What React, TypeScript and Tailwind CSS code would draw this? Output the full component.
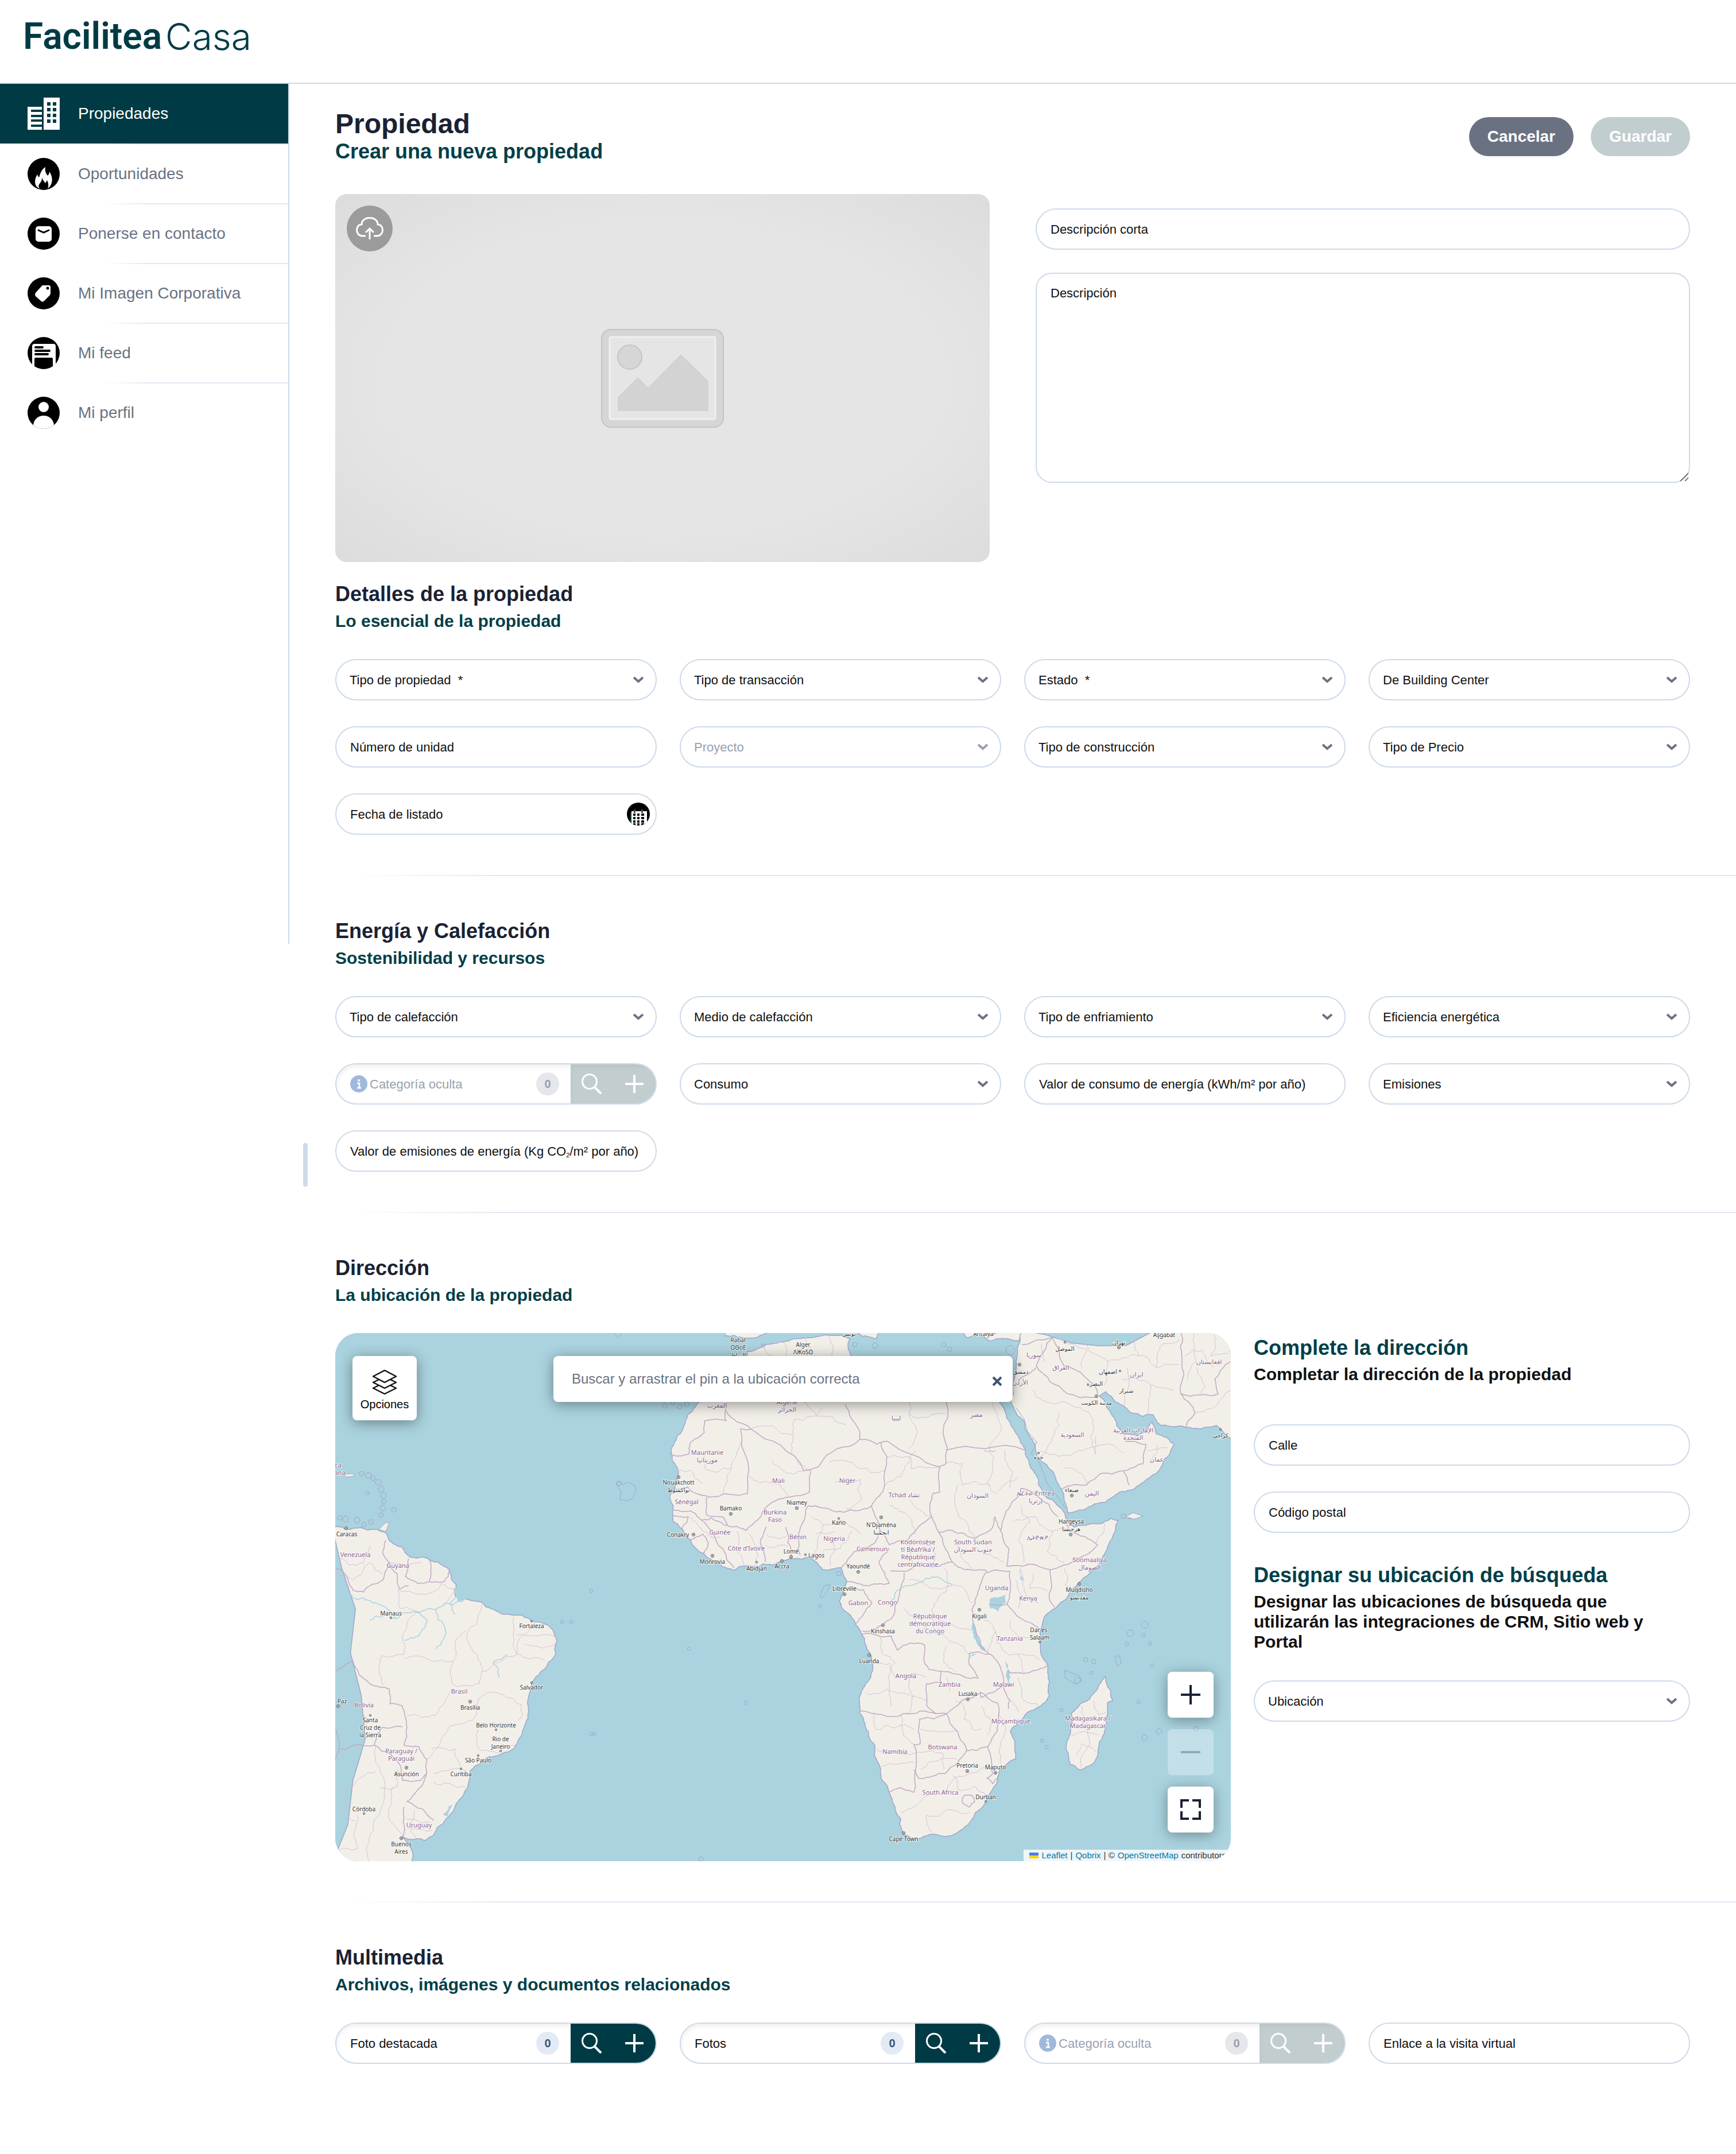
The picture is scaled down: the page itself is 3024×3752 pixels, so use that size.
import { ReactNode } from "react";

const NAV = [
  { label: "Propiedades", icon: "buildings", active: true },
  { label: "Oportunidades", icon: "flame" },
  { label: "Ponerse en contacto", icon: "mail" },
  { label: "Mi Imagen Corporativa", icon: "tag" },
  { label: "Mi feed", icon: "feed" },
  { label: "Mi perfil", icon: "user" },
];

function NavIcon({ name }: { name: string }) {
  if (name === "buildings") {
    return (
      <svg className="size-14 shrink-0" viewBox="0 0 56 56" fill="#fff">
        <path d="M0 16H25V21H6V25H25V30H6V34H25V38H6V42H25V47H6V51H25V56H0Z" />
        <path
          fillRule="evenodd"
          d="M28 0H56V56H28ZM34 8V14H40V8ZM44 8V14H50V8ZM34 18V24H40V18ZM44 18V24H50V18ZM34 28V34H40V28ZM44 28V34H50V28ZM34 38V44H40V38ZM44 38V44H50V38Z"
        />
      </svg>
    );
  }
  return (
    <svg className="size-14 shrink-0 rounded-full bg-black" viewBox="0 0 56 56" fill="#fff">
      {name === "flame" && (
        <>
          <path d="M31 16C30 24 32 27 35 31C37 29 38 27 38 24C43 31 44 40 41 46C39 51 35 54 29 55C20 55 13 50 13 42C13 36 15 32 17 29C18 32 19 33 20 34C22 28 24 20 31 16Z" />
          <path
            fill="#000"
            d="M25 34C26 38 28 40 31 44L34 39C37 45 37 51 34 54C31 56 24 56 21 53C17 49 21 45 23 42C25 39 25 37 25 34Z"
          />
        </>
      )}
      {name === "mail" && (
        <>
          <rect x="14" y="15" width="28" height="27" rx="5" />
          <path d="M19 22L28 26L37 22" stroke="#000" strokeWidth="3" fill="none" strokeLinecap="round" />
        </>
      )}
      {name === "tag" && (
        <>
          <path d="M27 14H37Q40 14 40 17V27Q40 29 39 31L29 41Q26 44 23 41L14 33Q12 30 14 27L24 16Q25 14 27 14Z" />
          <circle cx="35" cy="19" r="2.5" fill="#000" />
        </>
      )}
      {name === "feed" && (
        <>
          <rect x="8" y="12" width="41" height="48" rx="4" />
          <path d="M14 18H26M14 24H38M14 30H35" stroke="#000" strokeWidth="4" strokeLinecap="round" />
          <rect x="12" y="36" width="32" height="24" rx="2" fill="#000" />
        </>
      )}
      {name === "user" && (
        <>
          <circle cx="28" cy="18" r="9" />
          <path d="M10 51C10 40 18 33 28 33C38 33 46 40 46 51C41 55 35 56 28 56C21 56 15 55 10 51Z" />
        </>
      )}
    </svg>
  );
}

function Chevron({ muted }: { muted?: boolean }) {
  return (
    <svg
      className={
        muted
          ? "pointer-events-none absolute top-1/2 right-[22px] h-3 w-5 -translate-y-1/2 text-gray-400"
          : "pointer-events-none absolute top-1/2 right-[22px] h-3 w-5 -translate-y-1/2 text-gray-500"
      }
      viewBox="0 0 20 12"
      fill="none"
      stroke="currentColor"
      strokeWidth="4"
    >
      <path d="M2 2L10 9L18 2" />
    </svg>
  );
}

function SelectField({ label, disabled }: { label: string; disabled?: boolean }) {
  return (
    <div className="relative">
      <select
        aria-label={label}
        disabled={disabled}
        className="h-[72px] w-full appearance-none rounded-full border-2 border-[#cddaea] bg-white pr-14 pl-[23px] text-[22px] text-[#111] disabled:text-gray-400 disabled:opacity-100"
      >
        <option>{label}</option>
      </select>
      <Chevron muted={disabled} />
    </div>
  );
}

function TextField({ label, children }: { label: ReactNode; children?: ReactNode }) {
  return (
    <label className="relative block">
      <span className="pointer-events-none absolute inset-y-0 left-[26px] flex items-center text-[22px] whitespace-nowrap text-[#111]">
        <span>{label}</span>
      </span>
      <input
        type="text"
        className="block h-[72px] w-full rounded-full border-2 border-[#cddaea] px-6 text-[22px]"
      />
      {children}
    </label>
  );
}

function CalendarIcon() {
  return (
    <svg className="absolute top-4 right-3 size-10 rounded-full bg-black" viewBox="0 0 40 40">
      <path d="M6 18L9 15V40H6Z" fill="#0b4a55" />
      <path d="M8 15H12V12H15V15H25V12H28V15H35V40H8Z" fill="#fff" />
      <path d="M13.500 10V18M26.500 10V18" stroke="#000" strokeWidth="2" />
      <path
        d="M11 21H15M18 21H22M25 21H30M11 27H15M18 27H22M25 27H30M11 33H15M18 33H22M25 33H30M11 38H15M18 38H22M25 38H30"
        stroke="#000"
        strokeWidth="4"
      />
    </svg>
  );
}

function PickerField({ label, hidden }: { label: string; hidden?: boolean }) {
  return (
    <div className="flex h-[72px] items-stretch overflow-hidden rounded-full border-2 border-[#cddaea] shadow-[inset_0_4px_8px_rgba(0,0,0,0.07)]">
      <div className="flex min-w-0 flex-1 items-center pr-5 pl-6">
        {hidden && (
          <svg className="mr-1 size-[30px] shrink-0" viewBox="0 0 30 30">
            <circle cx="15" cy="15" r="15" fill="#9fb9dc" />
            <circle cx="15" cy="9" r="2" fill="#fff" />
            <path d="M12 14H16V22M12 22H19" stroke="#fff" strokeWidth="2.500" fill="none" />
          </svg>
        )}
        <span
          className={
            hidden
              ? "flex-1 text-[22px] whitespace-nowrap text-gray-400"
              : "flex-1 text-[22px] whitespace-nowrap text-[#111]"
          }
        >
          {label}
        </span>
        <span
          className={
            hidden
              ? "flex size-10 items-center justify-center rounded-full bg-gray-200 text-xl font-bold text-gray-400"
              : "flex size-10 items-center justify-center rounded-full bg-[#e2ebf4] text-xl font-bold text-[#3f5573]"
          }
        >
          0
        </span>
      </div>
      <div
        className={
          hidden
            ? "flex w-[148px] items-center bg-[#c2cdcf] shadow-[inset_0_4px_8px_rgba(0,0,0,0.05)]"
            : "flex w-[148px] items-center bg-[#003b45]"
        }
      >
        <button type="button" disabled={hidden} aria-label={"Buscar " + label} className="flex h-full flex-1 items-center justify-center">
          <svg className="size-9" viewBox="0 0 36 36" fill="none" stroke="#fff" strokeWidth="3">
            <circle cx="14" cy="14" r="12.500" />
            <path d="M22 23L34 35" strokeWidth="4" />
          </svg>
        </button>
        <button type="button" disabled={hidden} aria-label={"Añadir " + label} className="flex h-full flex-1 items-center justify-center">
          <svg className="size-8" viewBox="0 0 32 32" stroke="#fff" strokeWidth="4">
            <path d="M16 0V32M0 16H32" />
          </svg>
        </button>
      </div>
    </div>
  );
}

function Divider() {
  return (
    <div className="-mr-20 mt-[70px] mb-[72px] h-0.5 bg-[linear-gradient(to_right,transparent_20px,#e2e8f1_300px)]" />
  );
}

function SectionTitle({ title, subtitle }: { title: string; subtitle: string }) {
  return (
    <div className="mb-[43px]">
      <h2 className="text-[36px] leading-[48px] font-bold text-[#1a2233]">{title}</h2>
      <p className="text-[30px] leading-[46px] font-bold text-[#003f48]">{subtitle}</p>
    </div>
  );
}

/* ---------- map ---------- */

// Subdivides each segment and nudges the midpoints, so that borders look surveyed.
function rough(line: string, amount: number, close = false) {
  let pts = line
    .trim()
    .split(/\s+/)
    .map((p) => p.split(",").map(Number));
  if (close) pts.push(pts[0]);
  let seed = Math.round(pts[0][0] * 31 + pts[0][1] * 17 + pts.length);
  const rand = () => {
    seed = (seed * 1103515245 + 12345) % 2147483648;
    return seed / 2147483648 - 0.5;
  };
  for (let pass = 0; pass < 3; pass++) {
    const next = [pts[0]];
    for (let i = 1; i < pts.length; i++) {
      const [ax, ay] = pts[i - 1];
      const [bx, by] = pts[i];
      const len = Math.hypot(bx - ax, by - ay);
      if (len > 4) {
        const k = rand() * len * amount;
        next.push([(ax + bx) / 2 - ((by - ay) / len) * k, (ay + by) / 2 + ((bx - ax) / len) * k]);
      }
      next.push(pts[i]);
    }
    pts = next;
  }
  return "M" + pts.map((p) => p[0].toFixed(1) + " " + p[1].toFixed(1)).join("L") + (close ? "Z" : "");
}

const LAND = [
  // South America
  "-6,336 19,342 45,339 70,342 86,347 94,361 115,372 130,390 156,391 180,399 198,412 202,427 211,439 209,458 232,464 253,468 277,482 292,490 324,491 347,503 379,517 386,537 384,556 371,574 355,595 342,611 337,632 337,660 331,681 324,702 311,724 298,730 269,738 253,750 235,762 231,791 214,816 193,846 177,862 170,876 156,884 128,882 117,877 128,892 135,904 130,926 -6,926",
  // Africa
  "634,120 626,130 614,142 608,161 596,179 585,207 587,222 596,234 596,252 591,271 583,289 589,301 589,329 604,341 618,360 628,375 642,384 657,396 673,406 694,413 712,406 745,402 761,404 794,393 826,390 838,399 849,412 871,410 881,409 885,421 891,433 885,451 878,467 889,485 906,507 916,522 924,543 934,568 934,592 924,611 913,641 914,663 924,687 940,718 945,748 951,776 965,800 975,825 985,846 983,856 990,874 1004,880 1034,874 1063,877 1087,868 1108,849 1128,825 1135,813 1152,785 1156,764 1173,748 1185,742 1184,712 1176,693 1194,675 1207,660 1228,650 1244,632 1244,608 1242,580 1232,565 1228,543 1228,519 1238,491 1256,479 1280,451 1297,433 1321,412 1342,381 1359,344 1364,326 1352,323 1331,332 1304,335 1287,338 1276,326 1271,314 1259,301 1235,283 1225,265 1216,240 1204,216 1194,191 1176,158 1166,136 1156,118 1110,90 1000,95 930,80 905,50 897,36 893,20 897,10 885,3 840,6 800,10 760,19 733,29 718,32 700,62",
  // Asia
  "1190,-6 1188,38 1184,70 1180,90 1177,118 1182,130 1201,155 1214,185 1228,222 1249,240 1264,271 1271,295 1276,314 1304,308 1342,295 1366,277 1400,265 1418,252 1438,234 1442,222 1452,213 1461,194 1449,182 1431,176 1423,155 1414,170 1397,179 1373,176 1361,161 1349,136 1331,109 1342,102 1362,121 1387,139 1407,145 1424,142 1438,161 1480,164 1535,161 1552,179 1566,185 1566,-6",
  // Madagascar
  "1342,598 1349,620 1354,641 1345,644 1344,669 1331,712 1319,751 1297,761 1280,751 1273,724 1280,699 1282,663 1297,647 1314,638 1328,620",
  // Iberia, Sicily, Anatolia
  "676,-6 680,5 708,8 740,4 762,-6",
  "905,-6 918,6 942,10 950,-6",
  "1088,-6 1100,8 1130,6 1142,14 1168,10 1192,14 1196,-6",
];

const COUNTRIES = [
  "88,361 83,384 94,399 83,430 49,451 31,448 10,412 0,410",
  "94,399 108,420 112,446 128,440",
  "128,393 122,424 143,436 164,433 167,406 164,395",
  "164,433 190,433 200,412",
  "0,589 31,571 41,595 78,617 94,620 95,646 116,649 125,687 120,718 146,721 159,742 159,767 125,816 172,849",
  "7,724 68,718 81,687 117,686",
  "0,690 7,724 0,745",
  "68,718 115,758 117,779 149,779 159,767",
  "120,825 118,877",
  "583,211 616,211 618,191 643,173 643,153 681,153 681,124",
  "681,136 724,167 706,167 718,280 675,281 651,286 638,283 614,268 591,272",
  "724,167 816,240 843,231 914,185 900,150 889,124",
  "914,185 943,194 961,188 1053,233 1064,227 1064,120",
  "1064,204 1201,204",
  "951,191 961,216 957,265 934,301 900,308 871,311 824,301 818,320 810,338 810,387",
  "828,240 826,277 787,286 761,295 741,320 716,344 683,335 675,320 647,317 647,286",
  "1053,233 1053,277 1041,280 1039,320 1051,347 1075,344 1116,357 1141,344 1149,320 1159,344 1173,375 1170,406 1194,406 1245,412 1276,403 1328,369 1280,344 1271,316",
  "1159,344 1176,301 1194,271 1221,283 1259,320",
  "1245,412 1245,467 1254,480",
  "934,301 949,344 965,369 998,360 1039,320",
  "949,344 930,372 905,380 890,400 881,409",
  "965,375 947,399 965,436 930,440 891,433",
  "967,415 989,415 1026,406 1075,399 1096,412 1136,415",
  "1051,347 1060,370 1075,399",
  "991,418 981,461 969,497 949,510 918,519",
  "918,525 969,528 979,552 1002,540 1026,543 1034,586 1055,589 1055,608 1030,611 1030,647 1047,663 990,663 914,658",
  "1047,663 1065,663 1018,672 1019,715 1008,717 1008,800 985,792 965,800",
  "1008,761 1018,776 1063,767 1100,727 1083,693 1065,663 1124,626 1153,644 1153,693 1136,721 1100,727",
  "1136,721 1145,767 1135,775 1145,785 1155,775",
  "1055,589 1104,601 1120,601 1104,577 1104,559 1139,559 1159,583 1163,614 1125,635 1124,626",
  "1163,614 1175,640 1172,655",
  "1170,589 1207,592 1242,580",
  "1139,472 1170,472 1228,516",
  "1132,418 1175,415 1176,448 1170,472",
  "1132,418 1116,461 1111,503 1125,546 1139,559",
  "638,326 667,369 680,385 694,410",
  "589,308 620,310 638,326 655,322 683,335",
  "751,338 741,360 749,399",
  "785,338 788,365 794,390",
  "589,318 615,320 612,330 604,341",
  "618,360 640,350 650,365 642,384",
  "891,445 920,447 935,470 920,490 906,507",
  "1221,60 1190,84",
  "1196,20 1249,8 1221,57 1276,106 1325,112",
  "1266,271 1307,265 1331,246 1373,240 1407,228 1412,194 1376,188",
  "1373,240 1383,265",
  "1249,8 1269,57 1304,75 1328,106",
  "1470,-5 1476,8 1478,69 1473,106 1498,139 1481,164",
  "1473,106 1538,106 1532,80 1559,50",
  "1095,806 1110,806 1114,816 1104,826 1092,818 1095,806",
];

const REGIONS = [
  "141,484 117,534 120,559 81,562 83,614",
  "120,568 206,572",
  "256,470 248,497 232,519 253,574 251,611 204,611 206,572 209,540 227,519",
  "311,494 316,559 279,574 256,589",
  "340,510 316,559 365,570",
  "330,540 352,546 384,540",
  "316,525 350,528 384,530",
  "256,632 290,629 324,647 319,675",
  "201,684 240,674 256,632",
  "125,666 175,666 204,620",
  "201,684 177,724 159,742",
  "248,690 253,727 311,718",
  "167,724 209,724 217,755",
  "172,767 230,764",
  "170,782 227,791",
  "70,721 70,748 78,764 78,834 60,877 60,920",
  "78,791 107,791 110,760",
  "39,840 39,898 7,900",
  "15,782 18,834 35,850",
  "0,800 30,790 70,764",
  "100,791 95,850 118,877",
  "109,448 112,479 138,484",
  "109,448 185,436 211,450 190,476",
  "60,370 50,400 0,390",
  "0,420 30,430 60,400 83,420",
  "94,399 120,405 150,400",
  "125,845 145,850 165,852",
  "130,862 150,865 168,866",
  "138,830 140,880",
  "20,600 10,640 35,690",
  "0,660 40,655 60,690",
  "724,167 798,178 796,212 830,238",
  "798,178 800,150 850,130",
  "860,225 900,225 930,240 957,240",
  "817,120 840,145 890,160",
  "1000,120 998,202",
  "1000,140 1064,140",
  "1064,227 1092,227 1092,265 1140,265",
  "961,216 1002,216 1002,236 1053,233",
  "1010,205 1000,225 985,250 957,265",
  "1140,204 1135,260 1150,280 1190,250",
  "1145,120 1160,160 1140,204",
  "1165,204 1180,240 1175,270",
  "1085,265 1080,300 1100,330 1116,357",
  "643,211 643,235 690,235 706,190",
  "690,235 675,281",
  "596,238 620,240 640,262",
  "720,250 760,260 790,286",
  "760,222 780,240 816,240",
  "870,260 915,255 917,290 890,305",
  "620,320 640,345 670,355",
  "700,345 700,380 712,404",
  "720,350 735,375 730,404",
  "751,350 785,355",
  "751,370 788,372",
  "830,320 850,335 840,365 826,390",
  "850,335 890,330 915,350",
  "850,380 880,375 900,345",
  "865,360 862,405",
  "838,350 870,345",
  "1000,290 1020,310 1039,320",
  "965,300 1000,320 1010,350",
  "1025,365 1045,385 1040,402",
  "1000,370 1005,400 1020,408",
  "1080,360 1090,390 1110,410",
  "1110,375 1140,385 1165,400",
  "1000,430 1040,445 1090,440 1110,470",
  "1060,410 1065,450 1040,480 1045,517",
  "990,480 1020,520 1111,517",
  "1045,517 1080,540 1104,559",
  "1065,545 1060,575 1080,590",
  "934,575 965,575 975,600 1030,600",
  "950,530 955,560 975,575 965,620 968,650",
  "924,625 960,620 1000,630 1030,640",
  "1000,600 1000,663",
  "940,663 942,690 980,685 1008,690",
  "985,665 990,700 1008,717",
  "940,722 975,730 1008,732",
  "951,755 985,750 1008,748",
  "1019,690 1055,695 1083,693",
  "1008,732 1058,732 1060,760",
  "1020,760 1050,745 1085,745",
  "985,835 1020,815 1060,800 1100,770 1140,750",
  "1040,870 1030,840 1070,830 1105,835",
  "1075,770 1085,795 1115,790 1135,805",
  "1080,640 1095,650 1110,690 1125,690",
  "1125,650 1140,670 1136,700",
  "1070,625 1065,600",
  "1190,600 1200,640 1225,648",
  "1176,640 1190,660",
  "1155,660 1165,700 1160,750",
  "1175,500 1190,530 1228,530",
  "1150,520 1165,555 1200,560 1228,570",
  "1190,560 1200,592",
  "1130,500 1150,520 1135,555",
  "1194,410 1200,450 1225,470",
  "1215,420 1210,445 1240,450",
  "1185,430 1195,455 1190,480",
  "1194,300 1210,330 1190,360 1200,400",
  "1180,330 1220,320 1250,345 1240,380 1270,400",
  "1250,345 1280,344",
  "1337,327 1337,350 1325,366",
  "1270,410 1272,440 1285,448",
  "1282,700 1300,695 1330,700",
  "1290,735 1300,715 1325,730",
  "1300,650 1310,690 1300,760",
  "1320,640 1330,665 1344,660",
  "1215,100 1240,120 1290,130 1320,150 1325,210",
  "1228,205 1260,215 1300,205 1373,209",
  "1325,180 1325,212",
  "1260,140 1250,180 1228,215",
  "1270,235 1300,245 1310,262",
  "1230,20 1235,50",
  "1260,10 1310,30 1300,60",
  "1300,0 1320,35 1345,50 1340,90",
  "1345,50 1400,40 1430,60 1470,55",
  "1400,40 1395,0",
  "1370,80 1420,90 1460,100",
  "1420,90 1415,140",
  "1380,60 1375,125",
  "1430,60 1440,20 1470,10",
  "1480,40 1510,30 1530,60",
  "1495,0 1500,50 1485,80",
  "1530,0 1525,40 1560,30",
  "1500,60 1515,95 1505,106",
  "1498,139 1530,130 1560,100",
  "1430,195 1420,225",
  "1415,205 1450,200",
  "745,22 760,40",
  "780,16 785,40",
  "820,8 830,40",
  "860,6 865,40",
];

const RIVERS = [
  "0,448 30,462 65,470 90,480 107,497 138,484 175,482 206,473 227,461",
  "138,484 160,500 150,520 120,535",
  "175,482 190,510 175,550",
  "209,490 200,470 215,455",
  "60,500 85,492 107,497",
  "285,600 275,575 300,560",
  "965,470 1000,440 1040,425 1075,440",
  "1150,204 1130,205",
];

const LAKES = [
  "1140,463 1168,456 1169,470 1155,485 1141,480",
  "1110,503 1116,520 1124,538 1133,552 1128,553 1116,538 1110,522",
  "1166,570 1172,578 1176,600 1173,616 1169,600",
  "1189,408 1194,422 1199,432 1193,428",
  "206,445 226,452 236,460 214,468 210,458",
  "188,838 198,824 205,822 196,842",
  "1352,-4 1362,6 1382,8 1396,2 1400,-4",
  "1104,566 1110,559 1118,557 1110,562",
];

// x, y, r of the maritime borders drawn round small islands
const ISLANDS: [number, number, number][] = [
  [46, 245, 4], [58, 248, 5], [66, 253, 4], [75, 260, 5], [80, 272, 5], [84, 283, 5], [85, 294, 4], [83, 305, 5], [80, 317, 4],
  [102, 308, 4], [56, 279, 3], [8, 322, 4], [18, 324, 5], [38, 326, 5], [50, 334, 4], [62, 329, 4],
  [494, 262, 4], [446, 449, 3], [395, 503, 3], [411, 503, 3], [616, 550, 3], [715, 644, 3], [446, 698, 3], [451, 698, 3],
  [574, 127, 4], [588, 121, 4], [600, 128, 4], [612, 124, 4], [844, 476, 3], [877, 419, 4], [1385, 523, 6], [1410, 508, 6],
  [1379, 541, 3], [1408, 526, 3], [1419, 541, 3], [1423, 579, 3], [1307, 569, 4], [1321, 572, 4], [1317, 592, 3], [1293, 605, 5],
  [1399, 643, 3], [1410, 705, 5], [1435, 694, 5], [1265, 657, 3], [1231, 710, 3], [1239, 721, 3], [1499, 689, 4], [637, 916, 4],
  [1373, 319, 4], [1384, 321, 3], [1176, 30, 8], [905, 20, 4], [940, 22, 5], [1060, 20, 4], [1070, 28, 4], [745, 22, 3],
];

type Label = [number, number, string];

const COUNTRY_LABELS: Label[] = [
  [5, 230, "ca"], [8, 243, "ana"], [35, 386, "Venezuela"], [109, 405, "Guyana"], [216, 624, "Brasil"], [50, 648, "Bolivia"],
  [115, 728, "Paraguay /|Paraguái"], [146, 857, "Uruguay"], [648, 208, "Mauritanie|موريتانيا"], [612, 294, "Sénégal"],
  [772, 257, "Mali"], [892, 257, "Niger"], [766, 312, "Burkina|Faso"], [670, 347, "Guinée"], [716, 375, "Côte d’Ivoire"],
  [806, 355, "Bénin"], [869, 358, "Nigeria"], [935, 376, "Cameroun"],
  [1015, 364, "Ködörösêse|tî Bêafrîka /|République|centrafricaine"], [1111, 364, "South Sudan|جنوب السودان"],
  [1119, 283, "السودان"], [991, 282, "Tchad تشاد"], [977, 148, "ليبيا"], [1117, 142, "مصر"],
  [787, 120, "Algérie|الجزائر"], [665, 126, "المغرب"], [911, 470, "Gabon"], [962, 469, "Congo"],
  [1036, 493, "République|démocratique|du Congo"], [994, 597, "Angola"], [1070, 612, "Zambia"], [975, 729, "Namibia"],
  [1058, 721, "Botswana"], [1054, 800, "South Africa"], [1177, 676, "Moçambique"], [1164, 612, "Malawi"],
  [1175, 532, "Tanzania"], [1152, 444, "Uganda"], [1207, 462, "Kenya"], [1314, 395, "Soomaaliya|الصومال"],
  [1223, 356, "ኢትዮጵያ"], [1220, 279, "ኤርትራ Eritrea|إرتريا"], [1318, 279, "اليمن"], [1284, 177, "السعودية"],
  [1390, 169, "الإمارات العربية|المتحدة"], [1431, 220, "عمان"], [1396, 72, "ایران"], [1264, 60, "العراق"], [1217, 38, "سوريا"],
  [1193, 86, "الأردن"], [1522, 50, "افغانستان"], [1311, 671, "Madagasikara /|Madagascar"],
];

const CITY_LABELS: Label[] = [
  [20, 350, "Caracas"], [97, 488, "Manaus"], [342, 510, "Fortaleza"], [342, 617, "Salvador"], [235, 652, "Brasília"],
  [280, 683, "Belo Horizonte"], [288, 707, "Rio de|Janeiro"], [249, 744, "São Paulo"], [219, 768, "Curitiba"],
  [124, 768, "Asunción"], [61, 674, "Santa|Cruz de|la Sierra"], [12, 641, "Paz"], [50, 829, "Córdoba"], [115, 890, "Buenos|Aires"],
  [702, 12, "Rabat|OΘoE|الرباط"], [815, 20, "Alger|ΛЖoSO"], [895, 1, "تونس"], [1129, 1, "Antalya"],
  [598, 260, "Nouakchott|نواكشوط"], [689, 305, "Bamako"], [804, 295, "Niamey"], [597, 351, "Conakry"], [657, 398, "Monrovia"],
  [734, 410, "Abidjan"], [778, 406, "Accra"], [794, 380, "Lomé"], [838, 387, "Lagos"], [877, 330, "Kano"],
  [951, 334, "N'Djaména|انجمينا"], [911, 406, "Yaoundé"], [887, 445, "Libreville"], [954, 519, "Kinshasa"], [1122, 493, "Kigali"],
  [930, 571, "Luanda"], [1102, 628, "Lusaka"], [1101, 753, "Pretoria"], [1133, 808, "Durban"], [990, 881, "Cape Town"],
  [1150, 756, "Maputo"], [1227, 517, "Dar es-|Salaam"], [1296, 447, "Muqdisho|مقديشو"], [1282, 328, "Hargeysa|هرجيسا"],
  [1283, 273, "صنعاء"], [1225, 216, "جدة"], [1542, 178, "كراچى"], [1378, 100, "شیراز"], [1346, 67, "اصفهان"],
  [1323, 88, "البصرة"], [1326, 121, "مدينة الكويت"], [1271, 27, "الموصل"], [1194, 67, "دمشق"], [1365, 16, "تهران"],
  [1444, 3, "Aşgabat"],
];

// capitals get a ringed dot
const CAPITALS: [number, number][] = [
  [19, 340], [235, 642], [5, 650], [124, 757], [115, 880], [598, 251], [689, 315], [804, 305], [624, 351], [657, 388],
  [778, 397], [794, 390], [951, 321], [911, 416], [887, 455], [954, 509], [1122, 482], [930, 561], [1102, 638],
  [1101, 763], [1150, 766], [990, 871], [1296, 437], [1281, 351], [1283, 283], [1326, 110], [1192, 55], [1365, 25],
];

const TOWNS: [number, number][] = [
  [97, 496], [342, 502], [342, 609], [280, 691], [288, 728], [249, 736], [219, 759], [61, 666], [50, 837], [734, 399],
  [819, 386], [877, 323], [1133, 816], [1227, 538], [1225, 209], [1542, 168], [1271, 16], [1367, 66],
];

function MapLabels({ items, size, color }: { items: Label[]; size: number; color: string }) {
  return (
    <g fontSize={size} fill={color} stroke="#fff" strokeWidth="2" strokeOpacity=".75" paintOrder="stroke" textAnchor="middle">
      {items.map(([x, y, text]) =>
        text.split("|").map((line, i) => (
          <text key={line + x} x={x} y={y + 4 + i * 13}>
            {line}
          </text>
        ))
      )}
    </g>
  );
}

function WorldMap() {
  return (
    <svg
      className="block h-full w-full font-['Noto_Sans','DejaVu_Sans',sans-serif]"
      viewBox="0 0 1560 920"
      preserveAspectRatio="xMidYMid slice"
      role="img"
      aria-label="Mapa"
    >
      <rect width="1560" height="920" fill="#aad3df" />
      <g fill="#f2efe9" stroke="#9fa6c9" strokeWidth="1.500" strokeLinejoin="round">
        {LAND.map((d) => (
          <path key={d} d={rough(d, 0.22, true)} />
        ))}
      </g>
      <g fill="none" stroke="#aad3df" strokeWidth="1.500">
        {RIVERS.map((d) => (
          <path key={d} d={rough(d, 0.4)} />
        ))}
      </g>
      <g fill="#aad3df">
        {LAKES.map((d) => (
          <path key={d} d={rough(d, 0.3, true)} />
        ))}
      </g>
      <g fill="none" stroke="#d3c2d4" strokeWidth="1">
        {REGIONS.map((d) => (
          <path key={d} d={rough(d, 0.35)} />
        ))}
      </g>
      <g fill="none" stroke="#c1a8c4" strokeWidth="1.500" strokeLinejoin="round">
        {COUNTRIES.map((d) => (
          <path key={d} d={rough(d, 0.22)} />
        ))}
      </g>
      {/* maritime borders */}
      <g fill="none" stroke="#9fa6c9" strokeWidth="1">
        {ISLANDS.map(([x, y, r]) => (
          <circle key={x + "-" + y} cx={x} cy={y} r={r} />
        ))}
        <path d="M489 262L496 258L500 264L512 260L522 266L524 275L518 288L510 292L496 290L498 276Z" />
        <path d="M1270 587L1296 597L1300 606L1290 612L1272 601Z" />
        <path d="M844 458L852 440L862 438L858 448L848 462Z" />
        <path d="M1358 564L1366 562L1369 576L1362 580Z" />
        <path d="M76 342L88 330L94 330L88 346Z" fill="#f2efe9" />
        <path d="M1186 130L1200 150L1206 172L1222 190L1212 210L1226 224L1240 262L1262 290L1272 306" />
        <path d="M1376 320L1390 313L1407 319L1392 324Z" fill="#f2efe9" />
        <path d="M486 0L492 8L500 0" />
      </g>
      <path d="M16 246L30 245L34 249L20 251Z" fill="#f2efe9" stroke="#9fa6c9" />
      <g fill="#fff" stroke="#444" strokeWidth="1">
        {CAPITALS.map(([x, y]) => (
          <circle key={x + "-" + y} cx={x} cy={y} r="2.500" />
        ))}
        {TOWNS.map(([x, y]) => (
          <circle key={x + "-" + y} cx={x} cy={y} r="1.500" />
        ))}
      </g>
      <g fill="#444">
        {CAPITALS.map(([x, y]) => (
          <circle key={x + "-" + y} cx={x} cy={y} r="1" />
        ))}
      </g>
      <MapLabels items={COUNTRY_LABELS} size={11} color="#8a5f8c" />
      <MapLabels items={CITY_LABELS} size={10} color="#333" />
    </svg>
  );
}

function MapPanel() {
  return (
    <div className="relative h-[920px] overflow-hidden rounded-[40px] bg-[#aad3df]">
      <WorldMap />
      <button
        type="button"
        className="absolute top-10 left-[30px] flex size-28 flex-col items-center justify-end rounded-lg bg-white pb-4 text-xl leading-6 text-black shadow-[0_4px_24px_rgba(0,0,0,0.4)]"
      >
        <svg className="mb-1 h-11 w-12" viewBox="0 0 48 44" fill="#fff" stroke="#111" strokeWidth="2.500" strokeLinejoin="round">
          <path d="M24 22L44 32L24 42L4 32Z" />
          <path d="M24 12L44 22L24 32L4 22Z" />
          <path d="M24 1L44 11.500L24 22L4 11.500Z" />
        </svg>
        Opciones
      </button>
      <div className="absolute top-10 left-[380px] flex h-20 w-[800px] items-center rounded-lg bg-white shadow-[0_4px_24px_rgba(0,0,0,0.4)]">
        <input
          type="text"
          aria-label="Buscar ubicación"
          placeholder="Buscar y arrastrar el pin a la ubicación correcta"
          className="h-full flex-1 px-8 text-2xl placeholder:text-gray-500"
        />
        <button type="button" aria-label="Borrar" className="mt-2 mr-[18px]">
          <svg className="size-[18px]" viewBox="0 0 18 18" stroke="#3f5573" strokeWidth="4">
            <path d="M2 2L16 16M16 2L2 16" />
          </svg>
        </button>
      </div>
      <div className="absolute right-[30px] bottom-[50px] flex flex-col gap-5">
        <button type="button" aria-label="Acercar" className="flex size-20 items-center justify-center rounded-lg bg-white shadow-[0_4px_24px_rgba(0,0,0,0.35)]">
          <svg className="size-9" viewBox="0 0 36 36" stroke="#1a2233" strokeWidth="4">
            <path d="M18 1V35M1 18H35" />
          </svg>
        </button>
        <button type="button" aria-label="Alejar" disabled className="flex size-20 items-center justify-center rounded-lg bg-white/30">
          <svg className="size-9" viewBox="0 0 36 36" stroke="#8aadb8" strokeWidth="4">
            <path d="M1 18H35" />
          </svg>
        </button>
        <button type="button" aria-label="Pantalla completa" className="flex size-20 items-center justify-center rounded-lg bg-white shadow-[0_4px_24px_rgba(0,0,0,0.35)]">
          <svg className="size-9" viewBox="0 0 36 36" fill="none" stroke="#1a2233" strokeWidth="4">
            <path d="M2 15V2H15M21 2H34V15M34 21V34H21M15 34H2V21" />
          </svg>
        </button>
      </div>
      <div className="absolute right-0 bottom-0 flex h-5 items-center gap-[5px] bg-white/80 pr-2 pl-2.5 text-[15px] leading-5 whitespace-nowrap text-[#333]">
        <svg className="h-2.5 w-4" viewBox="0 0 16 10">
          <path fill="#4c7be1" d="M0 0h16v5H0z" />
          <path fill="#ffd500" d="M0 5h16v5H0z" />
        </svg>
        <a href="#leaflet" className="text-[#0078a8]">Leaflet</a>|
        <a href="#qobrix" className="text-[#0078a8]">Qobrix</a>| ©
        <a href="#osm" className="text-[#0078a8]">OpenStreetMap</a>
        contributors
      </div>
    </div>
  );
}

export default function App() {
  return (
    <div className="min-h-screen bg-white pb-[158px] font-['Liberation_Sans',Arial,sans-serif] text-[#111]">
      <header className="flex h-[146px] items-start border-b-2 border-[#cddaea] pt-[26px] pl-10">
        <a href="#inicio" className="flex gap-1.5 text-[64px] leading-[76px] text-[#003b45]">
          <span className="font-['Roboto',sans-serif] font-semibold">Facilitea</span>
          <span className="font-['Inter',sans-serif] font-light">Casa</span>
        </a>
      </header>

      <div className="flex items-start">
        <nav className="h-[1498px] w-[504px] shrink-0 border-r-2 border-[#cddaea]">
          {NAV.map((item, i) => (
            <div key={item.label}>
              <a
                href={"#" + item.icon}
                className={
                  item.active
                    ? "flex h-[104px] items-center gap-8 bg-[#003b45] pl-12 text-[28px] text-white"
                    : "flex h-[102px] items-center gap-8 pl-12 text-[28px] text-gray-500"
                }
              >
                <NavIcon name={item.icon} />
                {item.label}
              </a>
              {i < NAV.length - 1 && (
                <div className="h-0.5 bg-[linear-gradient(to_right,transparent_180px,#e2e8f1_260px)]" />
              )}
            </div>
          ))}
        </nav>

        <main className="relative min-w-0 flex-1 px-20 pt-11">
          {/* drag handle of the side panel */}
          <div className="absolute top-[1845px] left-6 h-[76px] w-2 rounded-full bg-[#cddaea]" />

          <div className="mb-[52px] flex items-center justify-between">
            <div>
              <h1 className="text-[48px] leading-[52px] font-bold text-[#1a2233]">Propiedad</h1>
              <p className="text-[36px] leading-[44px] font-bold text-[#003f48]">Crear una nueva propiedad</p>
            </div>
            <div className="flex gap-[30px]">
              <button type="button" className="h-[68px] rounded-full bg-gray-500 px-8 text-[28px] font-bold text-white">
                Cancelar
              </button>
              <button type="button" disabled className="h-[68px] rounded-full bg-[#c2cdcf] px-8 text-[28px] font-bold text-white">
                Guardar
              </button>
            </div>
          </div>

          <div className="mb-8 grid grid-cols-2 gap-20">
            <div className="relative flex aspect-[16/9] items-center justify-center rounded-[20px] bg-[radial-gradient(ellipse_at_center,#e5e5e5_60%,#dcdcdc_100%)]">
              <button type="button" aria-label="Subir imagen" className="absolute top-5 left-5 flex size-20 items-center justify-center rounded-full bg-[#9b9b9b]">
                <svg className="h-10 w-12" viewBox="0 0 48 40" fill="none" stroke="#fff" strokeWidth="3">
                  <path d="M17 33H12C5 33 1.500 28 1.500 23C1.500 17 5 13 10 13C10 6 16 1.500 24 1.500C32 1.500 38 6 38 13C43 13 46.500 17 46.500 23C46.500 28 43 33 36 33H31" />
                  <path d="M24 39V20M17 27L24 20L31 27" />
                </svg>
              </button>
              <svg className="h-[172px] w-[214px]" viewBox="0 0 214 172">
                <rect x="1" y="1" width="212" height="170" rx="16" fill="#d6d6d6" stroke="#c4c4c4" strokeWidth="2" />
                <rect x="15" y="14" width="184" height="143" rx="3" fill="#e5e5e5" stroke="#f0f0f0" strokeWidth="3" />
                <circle cx="50" cy="49" r="21" fill="#d6d6d6" stroke="#c4c4c4" strokeWidth="2" />
                <path d="M30 119L64 85L82 103L139 45L186 91V142H30Z" fill="#d3d3d3" stroke="#c8c8c8" />
              </svg>
            </div>
            <div className="flex flex-col gap-10 pt-[25px]">
              <TextField label="Descripción corta" />
              <label className="relative block">
                <span className="pointer-events-none absolute top-[22px] left-[26px] text-[22px] leading-7">Descripción</span>
                <textarea className="block h-[366px] w-full resize-none rounded-[28px] border-2 border-[#cddaea] px-6 pt-12 text-[22px]" />
                <svg className="absolute right-0.5 bottom-0.5 size-4" viewBox="0 0 16 16" stroke="#555" strokeWidth="1.500">
                  <path d="M1 15L15 1M9 15L15 9" />
                </svg>
              </label>
            </div>
          </div>

          <section>
            <SectionTitle title="Detalles de la propiedad" subtitle="Lo esencial de la propiedad" />
            <div className="grid grid-cols-4 gap-x-10 gap-y-[45px]">
              <SelectField label={"Tipo de propiedad\u00a0 *"} />
              <SelectField label="Tipo de transacción" />
              <SelectField label={"Estado\u00a0 *"} />
              <SelectField label="De Building Center" />
              <TextField label="Número de unidad" />
              <SelectField label="Proyecto" disabled />
              <SelectField label="Tipo de construcción" />
              <SelectField label="Tipo de Precio" />
              <TextField label="Fecha de listado">
                <CalendarIcon />
              </TextField>
            </div>
          </section>

          <Divider />

          <section>
            <SectionTitle title="Energía y Calefacción" subtitle="Sostenibilidad y recursos" />
            <div className="grid grid-cols-4 gap-x-10 gap-y-[45px]">
              <SelectField label="Tipo de calefacción" />
              <SelectField label="Medio de calefacción" />
              <SelectField label="Tipo de enfriamiento" />
              <SelectField label="Eficiencia energética" />
              <PickerField label="Categoría oculta" hidden />
              <SelectField label="Consumo" />
              <TextField label="Valor de consumo de energía (kWh/m² por año)" />
              <SelectField label="Emisiones" />
              <TextField
                label={
                  <>
                    Valor de emisiones de energía (Kg CO<sub className="text-[11px]">2</sub>/m² por año)
                  </>
                }
              />
            </div>
          </section>

          <Divider />

          <section>
            <SectionTitle title="Dirección" subtitle="La ubicación de la propiedad" />
            <div className="grid grid-cols-[39fr_19fr] gap-10">
              <MapPanel />
              <div className="pt-1">
                <h3 className="mb-1.5 text-[36px] leading-[44px] font-bold text-[#003f48]">Complete la dirección</h3>
                <p className="mb-[70px] text-[30px] leading-[35px] font-bold">Completar la dirección de la propiedad</p>
                <div className="mb-[52px] flex flex-col gap-[45px]">
                  <TextField label="Calle" />
                  <TextField label="Código postal" />
                </div>
                <h3 className="mb-1.5 text-[36px] leading-[44px] font-bold text-[#003f48]">Designar su ubicación de búsqueda</h3>
                <p className="mb-[50px] pr-6 text-[30px] leading-[35px] font-bold">
                  Designar las ubicaciones de búsqueda que utilizarán las integraciones de CRM, Sitio web y Portal
                </p>
                <SelectField label="Ubicación" />
              </div>
            </div>
          </section>

          <Divider />

          <section>
            <SectionTitle title="Multimedia" subtitle="Archivos, imágenes y documentos relacionados" />
            <div className="grid grid-cols-4 gap-x-10 gap-y-[45px]">
              <PickerField label="Foto destacada" />
              <PickerField label="Fotos" />
              <PickerField label="Categoría oculta" hidden />
              <TextField label="Enlace a la visita virtual" />
            </div>
          </section>
        </main>
      </div>
    </div>
  );
}
